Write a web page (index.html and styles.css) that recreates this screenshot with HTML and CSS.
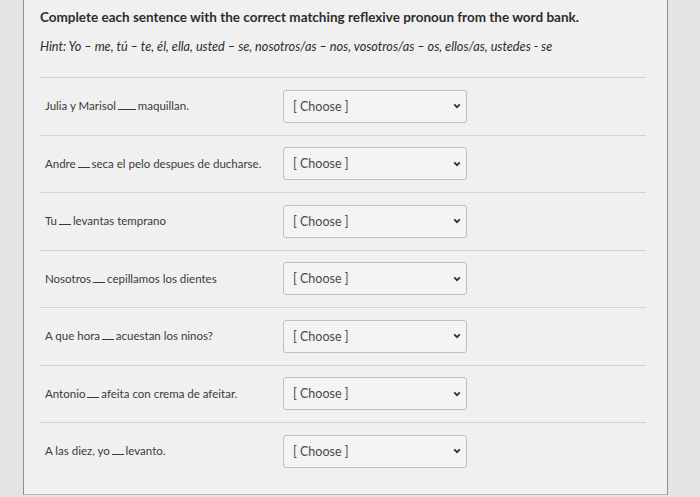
FILE: index.html
```html
<!DOCTYPE html>
<html lang="en">
<head>
    <meta charset="UTF-8">
    <meta name="viewport" content="width=device-width, initial-scale=1.0">
    <title>Reflexive pronouns</title>
    <link rel="stylesheet" href="styles.css">
</head>
<body>
    <div class="page">
        <div class="question">
            <div class="question-header">
                <p class="prompt">Complete each sentence with the correct matching reflexive pronoun from the word bank.</p>
                <p class="hint">Hint: Yo – me, tú – te, él, ella, usted – se, nosotros/as – nos, vosotros/as – os, ellos/as, ustedes - se</p>
            </div>
            <div class="answers">
                <div class="answer-row">
                    <div class="answer-label">Julia y Marisol <span class="blank long"></span> maquillan.</div>
                    <div class="select-box"><span>[ Choose ]</span><svg class="chevron" viewBox="0 0 10 7"><path d="M1.5 1.5 L5 5 L8.5 1.5"/></svg></div>
                </div>
                <div class="answer-row">
                    <div class="answer-label">Andre <span class="blank"></span> seca el pelo despues de ducharse.</div>
                    <div class="select-box"><span>[ Choose ]</span><svg class="chevron" viewBox="0 0 10 7"><path d="M1.5 1.5 L5 5 L8.5 1.5"/></svg></div>
                </div>
                <div class="answer-row">
                    <div class="answer-label">Tu <span class="blank"></span> levantas temprano</div>
                    <div class="select-box"><span>[ Choose ]</span><svg class="chevron" viewBox="0 0 10 7"><path d="M1.5 1.5 L5 5 L8.5 1.5"/></svg></div>
                </div>
                <div class="answer-row">
                    <div class="answer-label">Nosotros <span class="blank"></span> cepillamos los dientes</div>
                    <div class="select-box"><span>[ Choose ]</span><svg class="chevron" viewBox="0 0 10 7"><path d="M1.5 1.5 L5 5 L8.5 1.5"/></svg></div>
                </div>
                <div class="answer-row">
                    <div class="answer-label">A que hora <span class="blank"></span> acuestan los ninos?</div>
                    <div class="select-box"><span>[ Choose ]</span><svg class="chevron" viewBox="0 0 10 7"><path d="M1.5 1.5 L5 5 L8.5 1.5"/></svg></div>
                </div>
                <div class="answer-row">
                    <div class="answer-label">Antonio <span class="blank"></span> afeita con crema de afeitar.</div>
                    <div class="select-box"><span>[ Choose ]</span><svg class="chevron" viewBox="0 0 10 7"><path d="M1.5 1.5 L5 5 L8.5 1.5"/></svg></div>
                </div>
                <div class="answer-row">
                    <div class="answer-label">A las diez, yo <span class="blank"></span> levanto.</div>
                    <div class="select-box"><span>[ Choose ]</span><svg class="chevron" viewBox="0 0 10 7"><path d="M1.5 1.5 L5 5 L8.5 1.5"/></svg></div>
                </div>
            </div>
        </div>
    </div>
</body>
</html>
```
FILE: styles.css
```css
body {
    margin: 0;
    padding: 0;
    font-family: Lato, "Liberation Sans", sans-serif;
    background-color: #e4e4e4;
    color: #333333;
    height: 497px;
    overflow: hidden;
}
.page {
    padding-left: 23px;
}
.question {
    width: 611px;
    height: 494px;
    padding: 0 16px;
    background-color: #f0f0f0;
    border-left: 1px solid #8e8e8e;
    border-right: 1px solid #8e8e8e;
    border-bottom: 1px solid #b5b5b5;
}
.question-header {
    padding-top: 8px;
    border-bottom: 1px solid #d2d2d2;
    margin-right: 5px;
}
.prompt {
    margin: 0;
    font-size: 13.5px;
    font-weight: 700;
    line-height: 18px;
    color: #2d2d2d;
}
.hint {
    margin: 11px 0 0 0;
    padding-bottom: 22px;
    font-size: 12.7px;
    font-style: italic;
    line-height: 18px;
    color: #2d2d2d;
}
.answer-row {
    display: grid;
    grid-template-columns: 238px 184px;
    align-items: center;
    height: 56.5px;
    padding-left: 5px;
    margin-right: 5px;
    border-bottom: 1px solid #d2d2d2;
}
.answer-row:last-child {
    border-bottom: none;
}
.answer-label {
    font-size: 11.5px;
    line-height: 16px;
    color: #3a3a3a;
    white-space: nowrap;
}
.blank {
    display: inline-block;
    width: 12px;
    border-bottom: 1px solid #3a3a3a;
    margin: 0 -1px;
}
.blank.long {
    width: 18px;
}
.select-box {
    display: flex;
    align-items: center;
    justify-content: space-between;
    height: 33px;
    padding: 0 5px 0 9px;
    background-color: #f4f4f4;
    border: 1px solid #bfbfbf;
    border-radius: 3px;
    font-size: 12.5px;
    color: #4a4a4a;
    box-sizing: border-box;
}
.chevron {
    width: 8px;
    height: 6px;
    fill: none;
    stroke: #333333;
    stroke-width: 2.2;
}
```
